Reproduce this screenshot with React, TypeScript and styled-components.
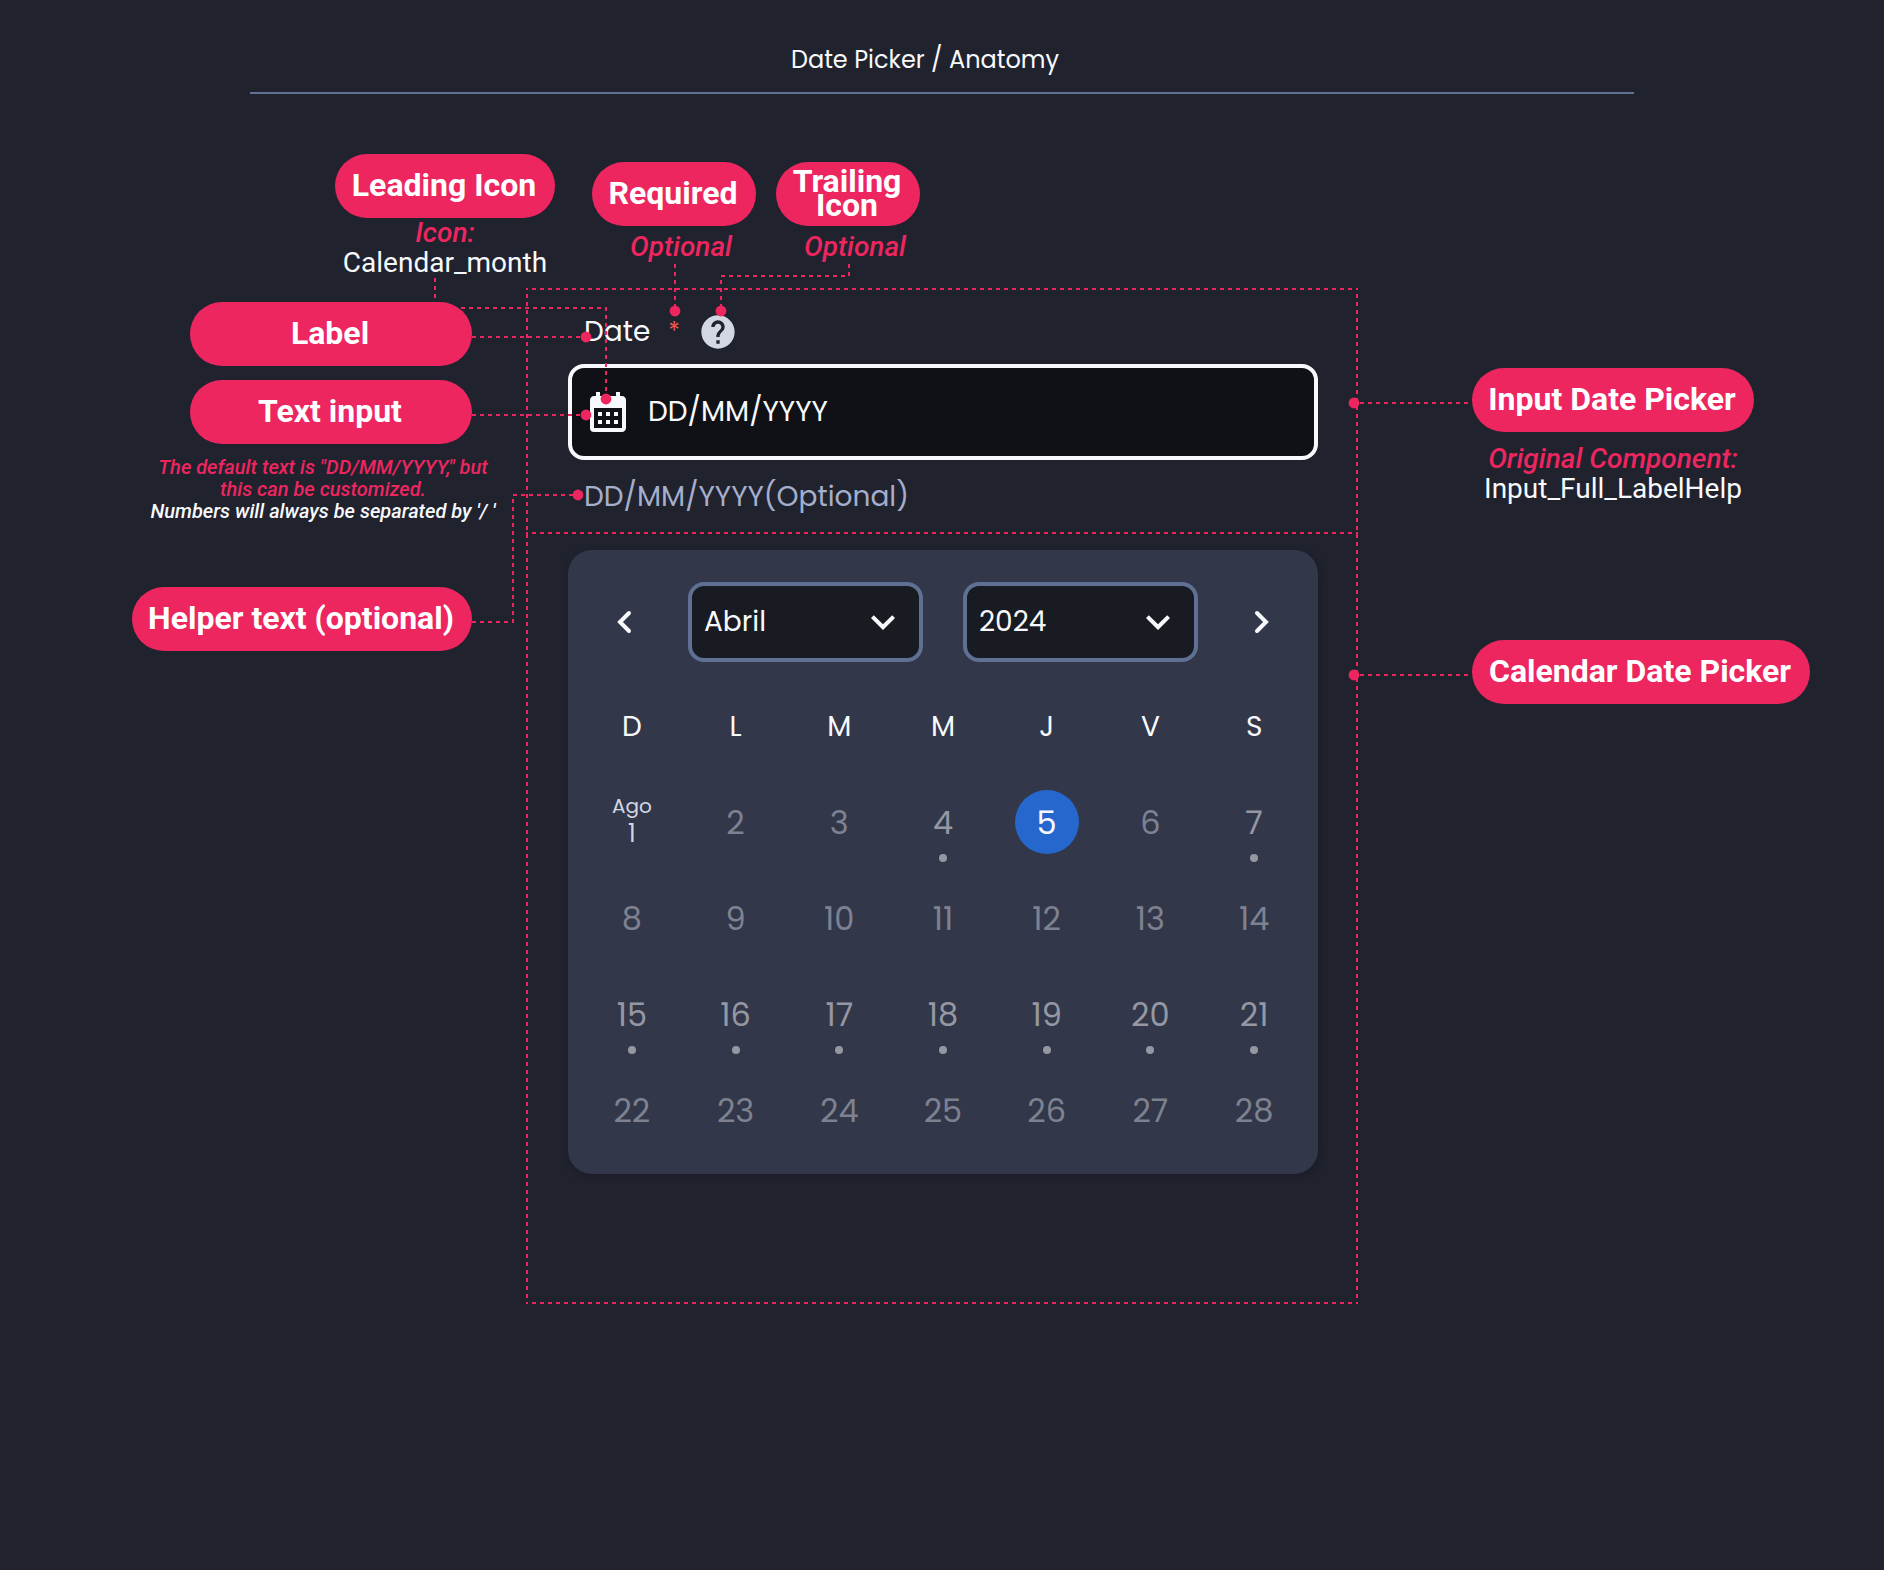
import React, { useId } from "react";
import styled, { createGlobalStyle } from "styled-components";
import { MdCalendarMonth, MdExpandMore, MdHelp } from "react-icons/md";

const color = {
  page: "#20222e",
  pink: "#ed2660",
  white: "#f8f9fc",
  rule: "#5f7095",
  field: "#101116",
  select: "#191b23",
  card: "#32374a",
  soft: "#d3d7e3",
  helper: "#a5aecb",
  day: "#7e8290",
  dayEvent: "#9598a2",
  today: "#2667cd",
  required: "#f2554f",
};

const ui = `Poppins, Inter, "Open Sans", sans-serif`;
const note = `Roboto, "Liberation Sans", sans-serif`;

const GlobalStyle = createGlobalStyle`
  *, *::before, *::after { box-sizing: border-box; }
  body { margin: 0; background: ${color.page}; }
`;

const Page = styled.div`
  min-height: 100vh;
  background: ${color.page};
  color: ${color.white};
  font-family: ${ui};
`;

const Header = styled.header`
  width: min(100%, 1384px);
  margin: 0 auto;
  padding: 42px 34px 14px 0;
  border-bottom: 2px solid ${color.rule};
`;

const Title = styled.h1`
  margin: 0;
  font-size: 24px;
  line-height: 36px;
  font-weight: 400;
  text-align: center;
`;

const TopNotes = styled.div`
  display: flex;
  align-items: flex-start;
  width: min(100%, 1214px);
  margin: 60px auto 0;
  padding-bottom: 10px;
  font-family: ${note};
`;

const Columns = styled.main`
  display: grid;
  grid-template-columns: 1fr minmax(0, 832px) 1fr;
`;

const LeftNotes = styled.aside`
  position: relative;
  z-index: 2;
  display: flex;
  flex-direction: column;
  align-items: flex-end;
  gap: 14px;
  padding: 14px 54px 0 0;
  font-family: ${note};
`;

const RightNotes = styled.aside`
  display: flex;
  flex-direction: column;
  align-items: flex-start;
  gap: 136px;
  padding: 80px 0 0 114px;
  font-family: ${note};
`;

const Note = styled.div<{ $top?: number; $left?: number; $gap?: number }>`
  display: flex;
  flex-direction: column;
  align-items: center;
  gap: ${(p) => p.$gap ?? 0}px;
  margin: ${(p) => p.$top ?? 0}px 0 0 ${(p) => p.$left ?? 0}px;
`;

const Pill = styled.div<{ $width: number }>`
  display: flex;
  align-items: center;
  justify-content: center;
  width: ${(p) => p.$width}px;
  height: 64px;
  padding: 0 14px 2px 12px;
  border-radius: 32px;
  background: ${color.pink};
  color: #fff;
  font-size: 32px;
  line-height: 24px;
  font-weight: 700;
  text-align: center;
`;

const Caption = styled.p<{ $indent?: number }>`
  margin: 0;
  padding-left: ${(p) => p.$indent ?? 0}px;
  font-size: 28px;
  line-height: 30px;
  text-align: center;
  white-space: nowrap;
`;

const Accent = styled.em`
  display: block;
  color: ${color.pink};
  font-weight: 500;
`;

const SmallCaption = styled.p`
  margin: -2px -26px 51px 0;
  width: 350px;
  font-size: 20px;
  line-height: 22px;
  font-weight: 500;
  font-style: italic;
  text-align: center;
`;

const dashes = `${color.pink} 0 2px, transparent 2px 6px, ${color.pink} 6px 8px`;
const dashesX = `repeating-linear-gradient(90deg, ${dashes})`;
const dashesY = `repeating-linear-gradient(180deg, ${dashes})`;

const Frame = styled.section`
  position: relative;
  background:
    ${dashesX} top / 100% 2px no-repeat,
    ${dashesX} bottom / 100% 2px no-repeat,
    ${dashesY} left / 2px 100% no-repeat,
    ${dashesY} right / 2px 100% no-repeat;
`;

const InputArea = styled.div`
  padding: 24px 40px 16px 42px;
  background: ${dashesX} bottom / 100% 2px no-repeat;
`;

const LabelRow = styled.div`
  display: flex;
  align-items: center;
  height: 40px;
  margin-bottom: 12px;
  padding-left: 16px;
`;

const FieldLabel = styled.label`
  font-size: 28px;
  line-height: 40px;
`;

const Required = styled.span`
  margin: 0 18px 0 18px;
  color: ${color.required};
  font-size: 24px;
  line-height: 40px;
`;

const HelpButton = styled.button`
  display: flex;
  padding: 0;
  border: 0;
  background: none;
  color: ${color.soft};
  font-size: 40px;
`;

const Field = styled.div`
  display: flex;
  align-items: center;
  gap: 16px;
  height: 96px;
  padding: 0 12px;
  border: 4px solid ${color.white};
  border-radius: 16px;
  background: ${color.field};
  font-size: 48px;
`;

const DateInput = styled.input`
  flex: 1;
  min-width: 0;
  padding: 0;
  border: 0;
  outline: 0;
  background: none;
  color: ${color.white};
  font: 400 28px/40px ${ui};
  &::placeholder { color: ${color.white}; opacity: 1; }
`;

const Helper = styled.p`
  margin: 16px 16px 0;
  color: ${color.helper};
  font-size: 28px;
  line-height: 42px;
`;

const CalendarArea = styled.div`
  padding: 16px 40px 130px 42px;
`;

const Card = styled.div`
  padding: 32px 12px 16px;
  border-radius: 24px;
  background: ${color.card};
  box-shadow: 2px 2px 8px rgba(0, 0, 0, 0.2);
`;

const Toolbar = styled.div`
  display: flex;
  align-items: center;
  gap: 40px;
  margin: 0 20px 16px;
`;

const ArrowButton = styled.button`
  display: flex;
  padding: 0;
  border: 0;
  background: none;
  color: ${color.white};
`;

const SelectBox = styled.div`
  position: relative;
  flex: 1;
  height: 80px;
  font-size: 48px;
  svg {
    position: absolute;
    top: 16px;
    right: 16px;
    pointer-events: none;
  }
`;

const Select = styled.select`
  appearance: none;
  display: block;
  width: 100%;
  height: 100%;
  padding: 0 60px 0 12px;
  border: 4px solid ${color.rule};
  border-radius: 16px;
  background: ${color.select};
  color: ${color.white};
  font: 400 28px/40px ${ui};
`;

const Month = styled.table`
  width: 100%;
  table-layout: fixed;
  border-collapse: collapse;
  th, td { height: 96px; padding: 0; text-align: center; vertical-align: middle; }
  th { padding-top: 2px; font-size: 28px; font-weight: 400; }
`;

const Day = styled.button<{ $kind: "plain" | "event" | "today" | "first" }>`
  position: relative;
  display: flex;
  flex-direction: column;
  align-items: center;
  justify-content: center;
  width: 64px;
  height: 64px;
  margin: 0 auto;
  padding: ${(p) => (p.$kind === "first" ? "0 0 4px" : "2px 0 0")};
  border: 0;
  border-radius: 50%;
  background: ${(p) => (p.$kind === "today" ? color.today : "none")};
  color: ${(p) =>
    ({ plain: color.day, event: color.dayEvent, today: color.white, first: color.soft })[p.$kind]};
  font-family: ${ui};
  font-size: ${(p) => (p.$kind === "first" ? 24 : 32)}px;
  line-height: 28px;
  font-weight: 400;
  &::after {
    content: "";
    display: ${(p) => (p.$kind === "event" ? "block" : "none")};
    position: absolute;
    bottom: -8px;
    width: 8px;
    height: 8px;
    border-radius: 50%;
    background: currentColor;
  }
  small { font-size: 20px; }
`;

const Wires = styled.svg`
  position: absolute;
  z-index: 1;
  top: 0;
  left: 0;
  width: 832px;
  height: 400px;
  overflow: visible;
  pointer-events: none;
`;

/* Connector routes, measured from the top left corner of the frame. The last pair is the dot. */
const routes: { d: string; dot: [number, number] }[] = [
  { d: "M-91 -10V20H80V111", dot: [80, 111] },
  { d: "M149 -24V23", dot: [149, 23] },
  { d: "M323 -24V-12H195V23", dot: [195, 23] },
  { d: "M-54 49H60", dot: [60, 49] },
  { d: "M-54 127H60", dot: [60, 127] },
  { d: "M-54 334H-13V207H52", dot: [52, 207] },
  { d: "M942 115H828", dot: [828, 115] },
  { d: "M942 387H828", dot: [828, 387] },
];

const Connectors = () => (
  <Wires aria-hidden="true">
    {routes.map(({ d, dot }) => (
      <g key={d}>
        <path d={d} fill="none" stroke={color.pink} strokeWidth="2" strokeDasharray="4 4" />
        <circle cx={dot[0]} cy={dot[1]} r="5.4" fill={color.pink} />
      </g>
    ))}
  </Wires>
);

const Arrow = ({ next }: { next?: boolean }) => (
  <svg width="48" height="48" viewBox="0 0 48 48" fill="none" stroke="currentColor" strokeWidth="4" strokeLinecap="round">
    <path d={next ? "M19 15L28 24L19 33" : "M29 15L20 24L29 33"} />
  </svg>
);

const weekdays = ["D", "L", "M", "M", "J", "V", "S"];
const weeks = [0, 1, 2, 3].map((w) => weekdays.map((_, i) => w * 7 + i + 1));
const events = new Set([4, 7, 15, 16, 17, 18, 19, 20, 21]);

const kindOf = (day: number) =>
  day === 1 ? "first" : day === 5 ? "today" : events.has(day) ? "event" : "plain";

export default function App() {
  const id = useId();
  return (
    <Page>
      <GlobalStyle />
      <Header>
        <Title>Date Picker / Anatomy</Title>
      </Header>

      <TopNotes>
        <Note>
          <Pill $width={220}>Leading Icon</Pill>
          <Caption>
            <Accent>Icon:</Accent>Calendar_month
          </Caption>
        </Note>
        <Note $top={8} $left={37} $gap={6}>
          <Pill $width={164}>Required</Pill>
          <Caption $indent={14}>
            <Accent>Optional</Accent>
          </Caption>
        </Note>
        <Note $top={8} $left={20} $gap={6}>
          <Pill $width={144}>Trailing Icon</Pill>
          <Caption $indent={14}>
            <Accent>Optional</Accent>
          </Caption>
        </Note>
      </TopNotes>

      <Columns>
        <LeftNotes>
          <Pill $width={282}>Label</Pill>
          <Pill $width={282}>Text input</Pill>
          <SmallCaption>
            <Accent>The default text is "DD/MM/YYYY," but this can be customized.</Accent>
            Numbers will always be separated by '/ '
          </SmallCaption>
          <Pill $width={340}>Helper text (optional)</Pill>
        </LeftNotes>

        <Frame>
          <InputArea>
            <LabelRow>
              <FieldLabel htmlFor={id}>Date</FieldLabel>
              <Required>*</Required>
              <HelpButton type="button" aria-label="Help">
                <MdHelp />
              </HelpButton>
            </LabelRow>
            <Field>
              <MdCalendarMonth />
              <DateInput id={id} type="text" placeholder="DD/MM/YYYY" />
            </Field>
            <Helper>DD/MM/YYYY(Optional)</Helper>
          </InputArea>

          <CalendarArea>
            <Card>
              <Toolbar>
                <ArrowButton type="button" aria-label="Previous month">
                  <Arrow />
                </ArrowButton>
                <SelectBox>
                  <Select aria-label="Month" defaultValue="Abril">
                    <option>Abril</option>
                  </Select>
                  <MdExpandMore />
                </SelectBox>
                <SelectBox>
                  <Select aria-label="Year" defaultValue="2024">
                    <option>2024</option>
                  </Select>
                  <MdExpandMore />
                </SelectBox>
                <ArrowButton type="button" aria-label="Next month">
                  <Arrow next />
                </ArrowButton>
              </Toolbar>
              <Month>
                <thead>
                  <tr>
                    {weekdays.map((name, i) => (
                      <th key={i} scope="col">{name}</th>
                    ))}
                  </tr>
                </thead>
                <tbody>
                  {weeks.map((week) => (
                    <tr key={week[0]}>
                      {week.map((day) => (
                        <td key={day}>
                          <Day type="button" $kind={kindOf(day)}>
                            {day === 1 && <small>Ago</small>}
                            {day}
                          </Day>
                        </td>
                      ))}
                    </tr>
                  ))}
                </tbody>
              </Month>
            </Card>
          </CalendarArea>
          <Connectors />
        </Frame>

        <RightNotes>
          <Note $gap={12}>
            <Pill $width={282}>Input Date Picker</Pill>
            <Caption>
              <Accent>Original Component:</Accent>Input_Full_LabelHelp
            </Caption>
          </Note>
          <Pill $width={338}>Calendar Date Picker</Pill>
        </RightNotes>
      </Columns>
    </Page>
  );
}
